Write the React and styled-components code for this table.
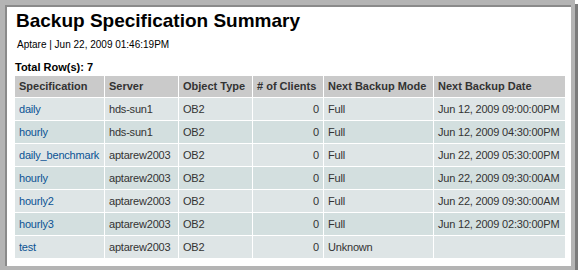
import React from "react";
import styled, { createGlobalStyle } from "styled-components";

const GlobalStyle = createGlobalStyle`
  html, body {
    margin: 0;
    padding: 0;
    background: #ffffff;
  }
  body {
    font-family: "Liberation Sans", Arial, sans-serif;
  }
`;

const Frame = styled.div`
  width: 575px;
  height: 270px;
  box-sizing: border-box;
  padding: 5px 4px 4px 5px;
  background: #b4b4b4;
  box-shadow: 3px 4px 0 #7b7b7b;
`;

const Panel = styled.div`
  height: 100%;
  box-sizing: border-box;
  background: #ffffff;
  border-top: 2px solid #8a8a8a;
  border-left: 2px solid #8a8a8a;
  padding: 3px 0 0 7px;
`;

const Title = styled.h1`
  margin: 0 0 0 2px;
  font-size: 19px;
  line-height: 22px;
  font-weight: bold;
  color: #000000;
`;

const Meta = styled.div`
  margin: 7px 0 0 3px;
  font-size: 10px;
  line-height: 12px;
  color: #000000;
`;

const Total = styled.div`
  margin: 10px 0 0 1px;
  font-size: 11px;
  line-height: 13px;
  font-weight: bold;
  color: #000000;
`;

const Table = styled.table`
  margin-top: 1px;
  width: 552px;
  table-layout: fixed;
  border-collapse: separate;
  border-spacing: 1px;
  font-size: 11px;
  line-height: 13px;
`;

const Col = styled.col`
  width: ${(p) => p.$w}px;
`;

const HeadCell = styled.th`
  height: 21px;
  padding: 0 4px;
  background: #cacaca;
  color: #333333;
  font-weight: bold;
  text-align: left;
  white-space: nowrap;
  overflow: hidden;
`;

const Row = styled.tr`
  background: ${(p) => (p.$alt ? "#d3dfdf" : "#dee5e6")};
`;

const Cell = styled.td`
  height: 22px;
  padding: 0 4px;
  color: #333333;
  letter-spacing: -0.2px;
  text-align: ${(p) => p.$align || "left"};
  white-space: nowrap;
  overflow: hidden;
`;

const SpecLink = styled.a`
  color: #0b5394;
  text-decoration: none;
`;

const columns = [
  { label: "Specification", width: 89 },
  { label: "Server", width: 73 },
  { label: "Object Type", width: 73 },
  { label: "# of Clients", width: 70 },
  { label: "Next Backup Mode", width: 109 },
  { label: "Next Backup Date", width: 131 },
];

const rows = [
  ["daily", "hds-sun1", "OB2", "0", "Full", "Jun 12, 2009 09:00:00PM"],
  ["hourly", "hds-sun1", "OB2", "0", "Full", "Jun 12, 2009 04:30:00PM"],
  ["daily_benchmark", "aptarew2003", "OB2", "0", "Full", "Jun 22, 2009 05:30:00PM"],
  ["hourly", "aptarew2003", "OB2", "0", "Full", "Jun 22, 2009 09:30:00AM"],
  ["hourly2", "aptarew2003", "OB2", "0", "Full", "Jun 22, 2009 09:30:00AM"],
  ["hourly3", "aptarew2003", "OB2", "0", "Full", "Jun 12, 2009 02:30:00PM"],
  ["test", "aptarew2003", "OB2", "0", "Unknown", ""],
];

export default function App() {
  return (
    <>
      <GlobalStyle />
      <Frame>
        <Panel>
          <Title>Backup Specification Summary</Title>
          <Meta>Aptare | Jun 22, 2009 01:46:19PM</Meta>
          <Total>Total Row(s): 7</Total>
          <Table>
            <colgroup>
              {columns.map((c) => (
                <Col key={c.label} $w={c.width} />
              ))}
            </colgroup>
            <thead>
              <tr>
                {columns.map((c) => (
                  <HeadCell key={c.label}>{c.label}</HeadCell>
                ))}
              </tr>
            </thead>
            <tbody>
              {rows.map((r, i) => (
                <Row key={i} $alt={i % 2 === 1}>
                  <Cell>
                    <SpecLink href="#">{r[0]}</SpecLink>
                  </Cell>
                  <Cell>{r[1]}</Cell>
                  <Cell>{r[2]}</Cell>
                  <Cell $align="right">{r[3]}</Cell>
                  <Cell>{r[4]}</Cell>
                  <Cell>{r[5]}</Cell>
                </Row>
              ))}
            </tbody>
          </Table>
        </Panel>
      </Frame>
    </>
  );
}
